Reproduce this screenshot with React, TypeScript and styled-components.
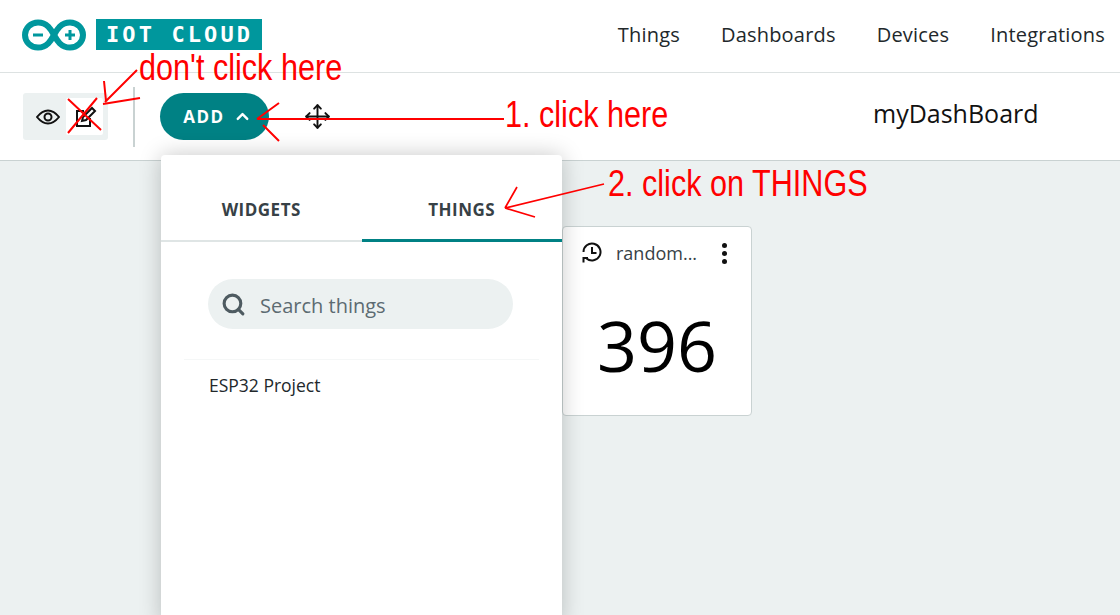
import { createGlobalStyle, styled } from 'styled-components';
import { ChevronUp, Move, Search } from 'lucide-react';

const tabs = ['WIDGETS', 'THINGS'];
const navItems = ['Things', 'Dashboards', 'Devices', 'Integrations'];

const App = () => (
  <Page>
    <GlobalStyle />
    <Header>
      <Logo>
        <LogoMark viewBox="0 0 64 32" aria-hidden="true">
          <path
            d="M16 3.500C8.800 3.500 3 9.200 3 16s5.800 12.500 13 12.500c9 0 13-7 16-12.500 3-5.500 7-12.500 16-12.500 7.200 0 13 5.700 13 12.500s-5.800 12.500-13 12.500c-9 0-13-7-16-12.500-3-5.500-7-12.500-16-12.500z"
            fill="none"
            stroke="#00979d"
            strokeWidth="6"
          />
          <path d="M11 14.500h10v3H11zM43 14.500h3.500V11h3v3.500H53v3h-3.500V21h-3v-3.500H43z" fill="#00979d" />
        </LogoMark>
        <LogoText>IOT CLOUD</LogoText>
      </Logo>
      <Nav>
        {navItems.map((item) => (
          <NavLink key={item}>{item}</NavLink>
        ))}
      </Nav>
    </Header>

    <Toolbar>
      <ViewToggle>
        <ToggleBtn>
          <svg width="24" height="24" viewBox="0 0 24 24" fill="none" stroke="#111" strokeWidth="2">
            <path d="M1 12C5 7 9 5.500 12 5.500S19 7 23 12C19 17 15 18.500 12 18.500S5 17 1 12z" />
            <circle cx="12" cy="12" r="3.500" />
          </svg>
        </ToggleBtn>
        <ToggleBtn $active>
          <svg width="24" height="24" viewBox="0 0 24 24" fill="none" stroke="#111" strokeWidth="2">
            <path d="M11 6H4v15h13v-8" />
            <path d="M9 16l1-4 9-9 3 3-9 9z" />
          </svg>
        </ToggleBtn>
      </ViewToggle>
      <Divider />
      <AddBtn>
        ADD
        <ChevronUp size={19} strokeWidth={3} />
      </AddBtn>
      <MoveBtn>
        <Move size={27} strokeWidth={1.7} />
      </MoveBtn>
      <Title>myDashBoard</Title>
    </Toolbar>

    <Canvas>
      <Card>
        <CardHead>
          <svg width="24" height="24" viewBox="0 0 24 24" fill="none" stroke="#111" strokeWidth="2">
            <path d="M3.500 11a8.500 8.500 0 1 1 3 6.500" />
            <path d="M3.500 21.500v-4.500h4.500" />
            <path d="M12 6v6h4.500" />
          </svg>
          <CardName>random...</CardName>
          <Dots>
            <i />
            <i />
            <i />
          </Dots>
        </CardHead>
        <CardValue>396</CardValue>
      </Card>
    </Canvas>

    <Panel>
      <Tabs>
        {tabs.map((t) => (
          <Tab key={t} $active={t === 'THINGS'}>
            {t}
          </Tab>
        ))}
      </Tabs>
      <PanelBody>
        <SearchBox>
          <Search size={25} strokeWidth={3} color="#4e5b61" />
          <SearchText>Search things</SearchText>
        </SearchBox>
        <Rule />
        <ThingName>ESP32 Project</ThingName>
      </PanelBody>
    </Panel>

    <Scribble viewBox="0 0 1120 615" aria-hidden="true">
      <g stroke="#ff0000" strokeWidth="2" fill="none">
        <path d="M137 70L105 102M104 81L106 101M103 104L140 98" />
        <path d="M68 99L101 130M97 98L68 133" />
        <path d="M504 119H257M279 103L257 119M263 125L279 141" />
        <path d="M604 184L505 208M517 187L505 208M505 208L535 217" strokeWidth="1.700" />
      </g>
    </Scribble>
    <Note $x={139} $y={46} $w={202}>don't click here</Note>
    <Note $x={505} $y={93} $w={162}>1. click here</Note>
    <Note $x={608} $y={162} $w={258}>2. click on THINGS</Note>
  </Page>
);

export default App;

/* ---------------- styled-components ---------------- */

const GlobalStyle = createGlobalStyle`
  html, body {
    margin: 0;
    padding: 0;
    background: #fff;
  }
  * {
    box-sizing: border-box;
  }
`;

const Page = styled.div`
  position: relative;
  width: 1120px;
  height: 615px;
  overflow: hidden;
  display: flex;
  flex-direction: column;
  font-family: 'Open Sans', 'Liberation Sans', sans-serif;
  color: #111;
`;

const Header = styled.header`
  height: 73px;
  flex: none;
  display: flex;
  align-items: center;
  justify-content: space-between;
  padding: 0 15px 3px 22px;
  border-bottom: 1px solid #dde2e2;
`;

const Logo = styled.div`
  display: flex;
  align-items: center;
  gap: 10px;
`;

const LogoMark = styled.svg`
  width: 64px;
  height: 32px;
`;

const LogoText = styled.div`
  width: 166px;
  height: 31px;
  background: #00979d;
  color: #fff;
  font-family: 'DejaVu Sans Mono', 'Liberation Mono', monospace;
  font-weight: 700;
  font-size: 22px;
  line-height: 31px;
  letter-spacing: 3.100px;
  padding-left: 10px;
  white-space: nowrap;
`;

const Nav = styled.nav`
  display: flex;
  gap: 41px;
`;

const NavLink = styled.a`
  font-size: 20px;
  letter-spacing: 0.200px;
  color: #22282b;
`;

const Toolbar = styled.div`
  height: 88px;
  flex: none;
  display: flex;
  align-items: center;
  padding: 0 0 0 23px;
  border-bottom: 1px solid #c9d2d2;
`;

const ViewToggle = styled.div`
  width: 85px;
  height: 47px;
  display: flex;
  align-items: center;
  justify-content: flex-end;
  padding-right: 5px;
  background: #ecf1f1;
  border-radius: 3px;
`;

const ToggleBtn = styled.div<{ $active?: boolean }>`
  width: 37px;
  height: 37px;
  display: flex;
  align-items: center;
  justify-content: center;
  background: ${({ $active }) => ($active ? '#fff' : 'transparent')};
  border-radius: 2px;
`;

const Divider = styled.div`
  width: 2px;
  height: 60px;
  margin: 0 25px;
  background: #c9d2d2;
`;

const AddBtn = styled.button`
  width: 109px;
  height: 47px;
  display: flex;
  align-items: center;
  justify-content: center;
  gap: 8px;
  padding: 0 0 0 6px;
  border: none;
  border-radius: 24px;
  background: #008184;
  color: #fff;
  font-family: inherit;
  font-size: 17px;
  font-weight: 700;
  letter-spacing: 1.500px;
`;

const MoveBtn = styled.div`
  width: 27px;
  height: 27px;
  margin-left: 35px;
  color: #111;
`;

const Title = styled.h1`
  margin: -8px 0 0 542px;
  font-size: 25px;
  font-weight: 400;
  color: #111;
`;

const Canvas = styled.main`
  flex: 1;
  background: #ecf1f1;
  padding: 65px 0 0 562px;
`;

const Card = styled.section`
  width: 190px;
  height: 190px;
  display: flex;
  flex-direction: column;
  background: #fff;
  border: 1px solid #c9d2d2;
  border-radius: 4px;
`;

const CardHead = styled.div`
  display: flex;
  align-items: center;
  height: 52px;
  padding: 0 0 0 17px;
`;

const CardName = styled.span`
  margin-left: 12px;
  width: 106px;
  font-size: 18px;
  color: #374146;
`;

const Dots = styled.div`
  display: flex;
  flex-direction: column;
  gap: 3px;

  i {
    display: block;
    width: 5px;
    height: 5px;
    border-radius: 50%;
    background: #111;
  }
`;

const CardValue = styled.div`
  margin-top: 21px;
  text-align: center;
  font-size: 70px;
  line-height: 90px;
  color: #000;
`;

const Panel = styled.aside`
  position: absolute;
  left: 161px;
  top: 155px;
  width: 401px;
  height: 470px;
  background: #fff;
  border-radius: 4px;
  box-shadow: 0 0 22px rgba(0, 0, 0, 0.22);
`;

const Tabs = styled.div`
  display: grid;
  grid-template-columns: 1fr 1fr;
  height: 87px;
`;

const Tab = styled.div<{ $active?: boolean }>`
  display: flex;
  align-items: center;
  justify-content: center;
  padding-top: 24px;
  font-size: 17px;
  font-weight: 700;
  letter-spacing: 0.500px;
  color: #374146;
  border-bottom: ${({ $active }) => ($active ? '3px solid #008184' : '2px solid #dfe5e5')};
`;

const PanelBody = styled.div`
  padding: 37px 48px 0 47px;
`;

const SearchBox = styled.div`
  width: 305px;
  height: 50px;
  display: flex;
  align-items: center;
  gap: 14px;
  padding: 0 0 0 13px;
  background: #ecf1f1;
  border-radius: 25px;
`;

const SearchText = styled.span`
  margin-top: 2px;
  font-size: 20px;
  color: #5c6b71;
`;

const Rule = styled.div`
  height: 1px;
  margin: 30px -25px 0 -24px;
  background: #f5f7f7;
`;

const ThingName = styled.div`
  margin: 13px 0 0 1px;
  font-size: 17.500px;
  color: #22282b;
`;

const Scribble = styled.svg`
  position: absolute;
  left: 0;
  top: 0;
  width: 1120px;
  height: 615px;
  pointer-events: none;
`;

const Note = styled.div<{ $x: number; $y: number; $w: number }>`
  position: absolute;
  left: ${({ $x }) => $x}px;
  top: ${({ $y }) => $y}px;
  width: ${({ $w }) => $w}px;
  display: flex;
  white-space: nowrap;
  font-family: 'Liberation Sans', Arial, sans-serif;
  font-size: 36px;
  line-height: 44px;
  color: #ff0000;
  transform-origin: left center;
  transform: scaleX(0.85);
`;
